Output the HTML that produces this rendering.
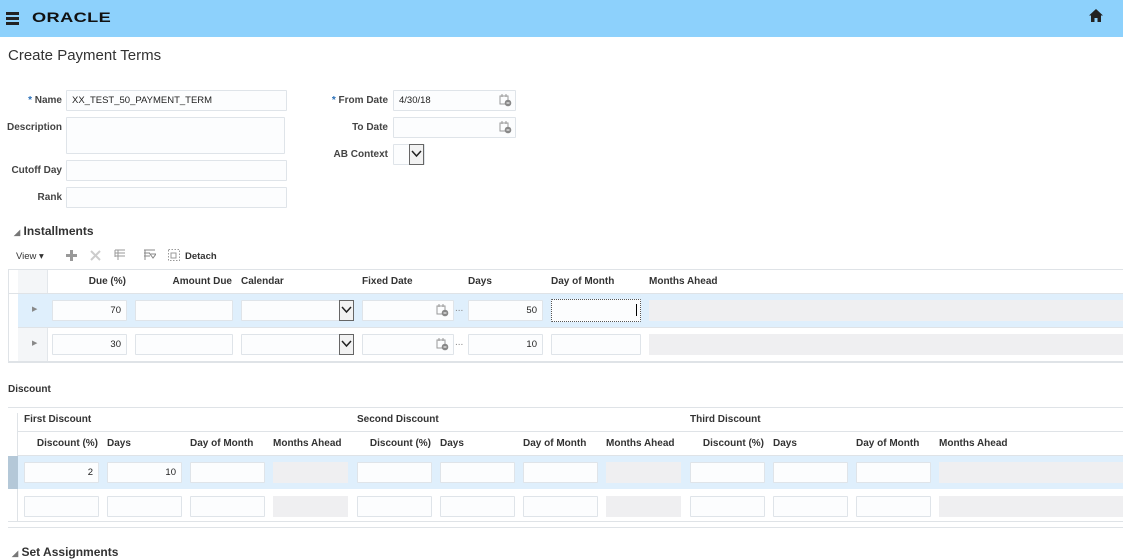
<!DOCTYPE html>
<html><head><meta charset="utf-8"><style>
*{box-sizing:border-box;margin:0;padding:0}
body{width:1123px;height:551px;overflow:hidden;background:#fff;font-family:"Liberation Sans",Arial,sans-serif;color:#333;position:relative}
.a{position:absolute}
.in{position:absolute;height:21px;background:#fcfdfe;border:1px solid #dfe4e9;border-radius:1px;font-size:9.5px;color:#222;line-height:19px;padding:0 5px}
.r{text-align:right}
.g{position:absolute;height:21px;background:#efeff1}
.lb{position:absolute;font-size:10px;font-weight:bold;color:#444;text-align:right}
.h{position:absolute;font-size:10px;font-weight:bold;color:#333}
.hl{position:absolute;height:1px;background:#dfe3e7}
.dd{position:absolute;width:15px;height:21px;border:1px solid #666;background:#f2f2f2}
</style></head><body>
<div class="a" style="left:0;top:0;width:1123px;height:37px;background:#8dd1fc"></div>
<div class="a" style="left:6px;top:12px;width:13px;height:3px;background:#222"></div>
<div class="a" style="left:6px;top:17px;width:13px;height:3px;background:#222"></div>
<div class="a" style="left:6px;top:22px;width:13px;height:3px;background:#222"></div>
<div class="a" style="left:32px;top:9px;font-size:14px;font-weight:bold;letter-spacing:0.3px;color:#111;transform:scaleX(1.3);transform-origin:left">ORACLE</div>
<svg class="a" style="left:1089px;top:9px" width="14" height="13" viewBox="0 0 14 13"><path d="M7 0L0 6.5h2V13h3.5V9h3v4H12V6.5h2z" fill="#222"/></svg>
<div class="a" style="left:8px;top:47px;font-size:15px;color:#333">Create Payment Terms</div>

<div class="lb" style="left:0;top:95px;width:62px"><span style="color:#2a6fb7">* </span>Name</div>
<div class="in" style="left:66px;top:90px;width:221px">XX_TEST_50_PAYMENT_TERM</div>
<div class="lb" style="left:0;top:122px;width:62px">Description</div>
<div class="in" style="left:66px;top:117px;width:219px;height:37px"></div>
<div class="lb" style="left:0;top:165px;width:62px">Cutoff Day</div>
<div class="in" style="left:66px;top:160px;width:221px"></div>
<div class="lb" style="left:0;top:192px;width:62px">Rank</div>
<div class="in" style="left:66px;top:187px;width:221px"></div>

<div class="lb" style="left:300px;top:95px;width:88px"><span style="color:#2a6fb7">* </span>From Date</div>
<div class="in" style="left:393px;top:90px;width:123px">4/30/18</div>
<div class="lb" style="left:300px;top:122px;width:88px">To Date</div>
<div class="in" style="left:393px;top:117px;width:123px"></div>
<div class="lb" style="left:300px;top:149px;width:88px">AB Context</div>
<div class="in" style="left:393px;top:144px;width:32px"></div>
<div class="dd" style="left:409px;top:144px;height:21px"></div>

<div class="a" style="left:14px;top:224px;font-size:12px;font-weight:bold;color:#333"><span style="font-size:8px;color:#777">&#9698;</span> Installments</div>
<div class="a" style="left:16px;top:251px;font-size:9.5px;color:#333">View &#9662;</div>
<svg class="a" style="left:66px;top:250px" width="11" height="11"><path d="M4 0h3v4h4v3H7v4H4V7H0V4h4z" fill="#999"/></svg>
<svg class="a" style="left:90px;top:250px" width="11" height="11"><path d="M1 1l9 9M10 1l-9 9" stroke="#ccc" stroke-width="2"/></svg>
<svg class="a" style="left:114px;top:249px" width="12" height="12"><path d="M1 1h10M1 4h10M1 7h10M4 1v10M1 1v7" stroke="#999" stroke-width="1" fill="none"/></svg>
<svg class="a" style="left:144px;top:249px" width="12" height="12"><path d="M0 1h11M0 4h6M0 7h6M1 1v10M6 5l3 4 3-4z" stroke="#888" fill="none"/></svg>
<svg class="a" style="left:168px;top:249px" width="12" height="12"><rect x="0.5" y="0.5" width="11" height="11" fill="none" stroke="#999" stroke-dasharray="1.5 1.5"/><rect x="3" y="4" width="5" height="5" fill="none" stroke="#999"/></svg>
<div class="a" style="left:185px;top:251px;font-size:9.5px;font-weight:bold;color:#333">Detach</div>

<div class="hl" style="left:8px;top:269px;width:1115px"></div>
<div class="a" style="left:8px;top:270px;width:10px;height:91px;background:#fff;border-left:1px solid #dfe3e7"></div>
<div class="a" style="left:18px;top:270px;width:30px;height:91px;background:#f4f6f8;border-right:1px solid #e3e7eb"></div>
<div class="h" style="left:52px;top:276px;width:74px;text-align:right">Due (%)</div>
<div class="h" style="left:135px;top:276px;width:97px;text-align:right">Amount Due</div>
<div class="h" style="left:241px;top:276px">Calendar</div>
<div class="h" style="left:362px;top:276px">Fixed Date</div>
<div class="h" style="left:468px;top:276px">Days</div>
<div class="h" style="left:551px;top:276px">Day of Month</div>
<div class="h" style="left:649px;top:276px">Months Ahead</div>
<div class="hl" style="left:8px;top:293px;width:1115px"></div>
<div class="a" style="left:18px;top:294px;width:1105px;height:33px;background:#dfeffc"></div>
<div class="hl" style="left:18px;top:327px;width:1105px"></div>
<div class="hl" style="left:8px;top:361px;width:1115px;height:2px"></div>
<div class="a" style="left:32px;top:305px;font-size:7px;color:#888">&#9654;</div>
<div class="a" style="left:32px;top:339px;font-size:7px;color:#888">&#9654;</div>

<div class="in r" style="left:52px;top:300px;width:75px">70</div>
<div class="in" style="left:135px;top:300px;width:98px"></div>
<div class="in" style="left:241px;top:300px;width:112px"></div>
<div class="dd" style="left:339px;top:300px"></div>
<div class="in" style="left:362px;top:300px;width:92px"></div>
<div class="a" style="left:455px;top:303px;font-size:10px;color:#888">...</div>
<div class="in r" style="left:468px;top:300px;width:75px">50</div>
<div class="in" style="left:551px;top:299px;width:90px;border:1px dotted #555;height:23px"></div>
<div class="a" style="left:636px;top:304px;width:1px;height:12px;background:#000"></div>
<div class="g" style="left:649px;top:300px;width:474px"></div>

<div class="in r" style="left:52px;top:334px;width:75px">30</div>
<div class="in" style="left:135px;top:334px;width:98px"></div>
<div class="in" style="left:241px;top:334px;width:112px"></div>
<div class="dd" style="left:339px;top:334px"></div>
<div class="in" style="left:362px;top:334px;width:92px"></div>
<div class="a" style="left:455px;top:337px;font-size:10px;color:#888">...</div>
<div class="in r" style="left:468px;top:334px;width:75px">10</div>
<div class="in" style="left:551px;top:334px;width:90px"></div>
<div class="g" style="left:649px;top:334px;width:474px"></div>

<svg class="a" style="left:411px;top:150px" width="11" height="8"><path d="M1 1l4.5 5 4.5-5" stroke="#222" stroke-width="1.5" fill="none"/></svg>
<svg class="a" style="left:341px;top:306px" width="11" height="8"><path d="M1 1l4.5 5 4.5-5" stroke="#222" stroke-width="1.5" fill="none"/></svg>
<svg class="a" style="left:341px;top:340px" width="11" height="8"><path d="M1 1l4.5 5 4.5-5" stroke="#222" stroke-width="1.5" fill="none"/></svg>

<svg class="a" style="left:499px;top:93px" width="13" height="14" viewBox="0 0 13 14"><path d="M1 3h8v8H1zM3 1v3M7 1v3" stroke="#999" fill="none"/><circle cx="9" cy="10" r="3.3" fill="#888"/><path d="M7.5 10h3" stroke="#fff"/></svg>
<svg class="a" style="left:499px;top:120px" width="13" height="14" viewBox="0 0 13 14"><path d="M1 3h8v8H1zM3 1v3M7 1v3" stroke="#999" fill="none"/><circle cx="9" cy="10" r="3.3" fill="#888"/><path d="M7.5 10h3" stroke="#fff"/></svg>
<svg class="a" style="left:436px;top:303px" width="13" height="14" viewBox="0 0 13 14"><path d="M1 3h8v8H1zM3 1v3M7 1v3" stroke="#999" fill="none"/><circle cx="9" cy="10" r="3.3" fill="#888"/><path d="M7.5 10h3" stroke="#fff"/></svg>
<svg class="a" style="left:436px;top:337px" width="13" height="14" viewBox="0 0 13 14"><path d="M1 3h8v8H1zM3 1v3M7 1v3" stroke="#999" fill="none"/><circle cx="9" cy="10" r="3.3" fill="#888"/><path d="M7.5 10h3" stroke="#fff"/></svg>

<div class="h" style="left:8px;top:384px">Discount</div>
<div class="hl" style="left:8px;top:407px;width:1115px"></div>
<div class="a" style="left:17px;top:413px;width:1px;height:109px;background:#dfe3e7"></div>
<div class="h" style="left:24px;top:414px">First Discount</div>
<div class="h" style="left:357px;top:414px">Second Discount</div>
<div class="h" style="left:690px;top:414px">Third Discount</div>
<div class="hl" style="left:18px;top:431px;width:1105px"></div>
<div class="hl" style="left:18px;top:455px;width:1105px"></div>
<div class="a" style="left:8px;top:456px;width:10px;height:33px;background:#b4c8d8"></div>
<div class="a" style="left:18px;top:456px;width:1105px;height:33px;background:#dfeffc"></div>
<div class="hl" style="left:8px;top:521px;width:1115px;height:1px"></div>
<div class="hl" style="left:8px;top:527px;width:1115px"></div>
<div class="a" style="left:12px;top:545px;font-size:12px;font-weight:bold;color:#333"><span style="font-size:8px;color:#777">&#9698;</span> Set Assignments</div>

<div class="h" style="left:24px;top:438px;width:74px;text-align:right">Discount (%)</div>
<div class="h" style="left:107px;top:438px">Days</div>
<div class="h" style="left:190px;top:438px">Day of Month</div>
<div class="h" style="left:273px;top:438px">Months Ahead</div>
<div class="h" style="left:357px;top:438px;width:74px;text-align:right">Discount (%)</div>
<div class="h" style="left:440px;top:438px">Days</div>
<div class="h" style="left:523px;top:438px">Day of Month</div>
<div class="h" style="left:606px;top:438px">Months Ahead</div>
<div class="h" style="left:690px;top:438px;width:74px;text-align:right">Discount (%)</div>
<div class="h" style="left:773px;top:438px">Days</div>
<div class="h" style="left:856px;top:438px">Day of Month</div>
<div class="h" style="left:939px;top:438px">Months Ahead</div>

<div class="in r" style="left:24px;top:462px;width:75px">2</div>
<div class="in r" style="left:107px;top:462px;width:75px">10</div>
<div class="in" style="left:190px;top:462px;width:75px"></div>
<div class="g" style="left:273px;top:462px;width:75px"></div>
<div class="in" style="left:357px;top:462px;width:75px"></div>
<div class="in" style="left:440px;top:462px;width:75px"></div>
<div class="in" style="left:523px;top:462px;width:75px"></div>
<div class="g" style="left:606px;top:462px;width:75px"></div>
<div class="in" style="left:690px;top:462px;width:75px"></div>
<div class="in" style="left:773px;top:462px;width:75px"></div>
<div class="in" style="left:856px;top:462px;width:75px"></div>
<div class="g" style="left:939px;top:462px;width:184px"></div>

<div class="in" style="left:24px;top:496px;width:75px"></div>
<div class="in" style="left:107px;top:496px;width:75px"></div>
<div class="in" style="left:190px;top:496px;width:75px"></div>
<div class="g" style="left:273px;top:496px;width:75px"></div>
<div class="in" style="left:357px;top:496px;width:75px"></div>
<div class="in" style="left:440px;top:496px;width:75px"></div>
<div class="in" style="left:523px;top:496px;width:75px"></div>
<div class="g" style="left:606px;top:496px;width:75px"></div>
<div class="in" style="left:690px;top:496px;width:75px"></div>
<div class="in" style="left:773px;top:496px;width:75px"></div>
<div class="in" style="left:856px;top:496px;width:75px"></div>
<div class="g" style="left:939px;top:496px;width:184px"></div>
</body></html>
